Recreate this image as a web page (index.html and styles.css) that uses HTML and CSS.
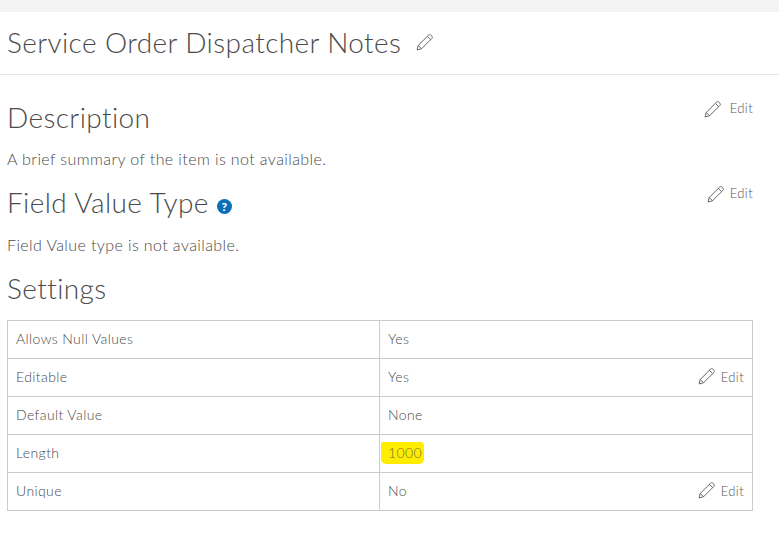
FILE: index.html
```html
<!DOCTYPE html>
<html lang="en">
<head>
    <meta charset="UTF-8">
    <title>Service Order Dispatcher Notes</title>
    <link rel="stylesheet" href="styles.css">
</head>
<body>
    <svg class="icon-defs" width="0" height="0">
        <symbol id="pencil" viewBox="0 0 16 16">
            <path d="M1 15l1.100-4.200L11.900 1c.6-.6 1.400-.6 2 0l1.100 1.100c.6.6.6 1.400 0 2L5.200 13.900zM2.100 10.800l3.100 3.100M10.700 2.200l3.100 3.100" fill="none" stroke="currentColor" stroke-width="0.9"/>
        </symbol>
    </svg>

    <div class="top-strip"></div>

    <header class="page-title">
        <h1>Service Order Dispatcher Notes</h1>
        <svg class="pencil title-pencil"><use href="#pencil"/></svg>
    </header>

    <main class="content">
        <section class="section section-description">
            <div class="section-head">
                <h2>Description</h2>
                <a class="edit edit-wide"><svg class="pencil"><use href="#pencil"/></svg>Edit</a>
            </div>
            <p>A brief summary of the item is not available.</p>
        </section>

        <section class="section section-type">
            <div class="section-head">
                <h2>Field Value Type <span class="help">?</span></h2>
                <a class="edit"><svg class="pencil"><use href="#pencil"/></svg>Edit</a>
            </div>
            <p>Field Value type is not available.</p>
        </section>

        <section class="section section-settings">
            <h2>Settings</h2>
            <table class="settings">
                <tr><td class="name">Allows Null Values</td><td>Yes</td></tr>
                <tr>
                    <td class="name">Editable</td>
                    <td><div class="value-row">Yes<a class="edit"><svg class="pencil"><use href="#pencil"/></svg>Edit</a></div></td>
                </tr>
                <tr><td class="name">Default Value</td><td>None</td></tr>
                <tr><td class="name">Length</td><td><span class="marked">1000</span></td></tr>
                <tr>
                    <td class="name">Unique</td>
                    <td><div class="value-row">No<a class="edit"><svg class="pencil"><use href="#pencil"/></svg>Edit</a></div></td>
                </tr>
            </table>
        </section>
    </main>
</body>
</html>
```

FILE: styles.css
```css
html, body {
    margin: 0;
    padding: 0;
    background-color: #fff;
    color: #4a4a4a;
    font-family: Lato, 'Open Sans', sans-serif;
    overflow: hidden;
}

.icon-defs {
    position: absolute;
}

.top-strip {
    height: 12px;
    background-color: #f3f3f3;
}

.page-title {
    display: flex;
    align-items: center;
    height: 63px;
    padding: 0 0 2px 7px;
    border-bottom: 1px solid #e4e4e4;
    box-sizing: border-box;
}

h1 {
    margin: 0;
    font-size: 28px;
    font-weight: 300;
    letter-spacing: 0.4px;
}

.pencil {
    width: 17px;
    height: 17px;
    color: #5f5f5f;
}

.title-pencil {
    margin-left: 15px;
}

.content {
    padding: 0 26px 0 7px;
}

.section h2 {
    margin: 0;
    font-size: 28px;
    line-height: 36px;
    font-weight: 300;
    letter-spacing: 0.4px;
}

.section p {
    margin: 0;
    font-size: 16px;
    line-height: 20px;
    font-weight: 300;
    color: #4a4a4a;
    letter-spacing: 0.4px;
}

.section-head {
    display: flex;
    justify-content: space-between;
    align-items: flex-start;
}

.section-description {
    padding-top: 24px;
}

.section-description p {
    margin-top: 14px;
}

.section-type {
    padding-top: 15px;
}

.section-type p {
    margin-top: 15px;
}

.section-settings {
    padding-top: 15px;
}

.section-settings h2 {
    margin-bottom: 14px;
}

.help {
    display: inline-block;
    width: 15px;
    height: 15px;
    border-radius: 50%;
    background-color: #0b6fb8;
    color: #fff;
    font-size: 12px;
    font-weight: 900;
    line-height: 15px;
    letter-spacing: 0;
    text-align: center;
    vertical-align: 2px;
}

.edit {
    display: inline-flex;
    align-items: center;
    gap: 6px;
    font-size: 13px;
    font-weight: 300;
    color: #555;
    letter-spacing: 0.4px;
}

.section-head .edit {
    margin-top: 1px;
}

.section-head .pencil {
    margin-bottom: -2px;
}

.edit-wide {
    gap: 9px;
}

.settings {
    width: 746px;
    border-collapse: collapse;
    table-layout: fixed;
    font-size: 14px;
    font-weight: 300;
    color: #4a4a4a;
    letter-spacing: 0.4px;
}

.settings .name {
    width: 372px;
}

.settings td {
    height: 38px;
    padding: 0 8px 2px;
    border: 1px solid #cbcbcb;
    box-sizing: border-box;
}

.value-row {
    display: flex;
    justify-content: space-between;
    align-items: center;
}

.marked {
    display: inline-block;
    margin-left: -7px;
    padding: 2px 2px 3px 7px;
    background-color: #ffec00;
    border-radius: 2px 4px 5px 5px;
    color: #777730;
}
```
